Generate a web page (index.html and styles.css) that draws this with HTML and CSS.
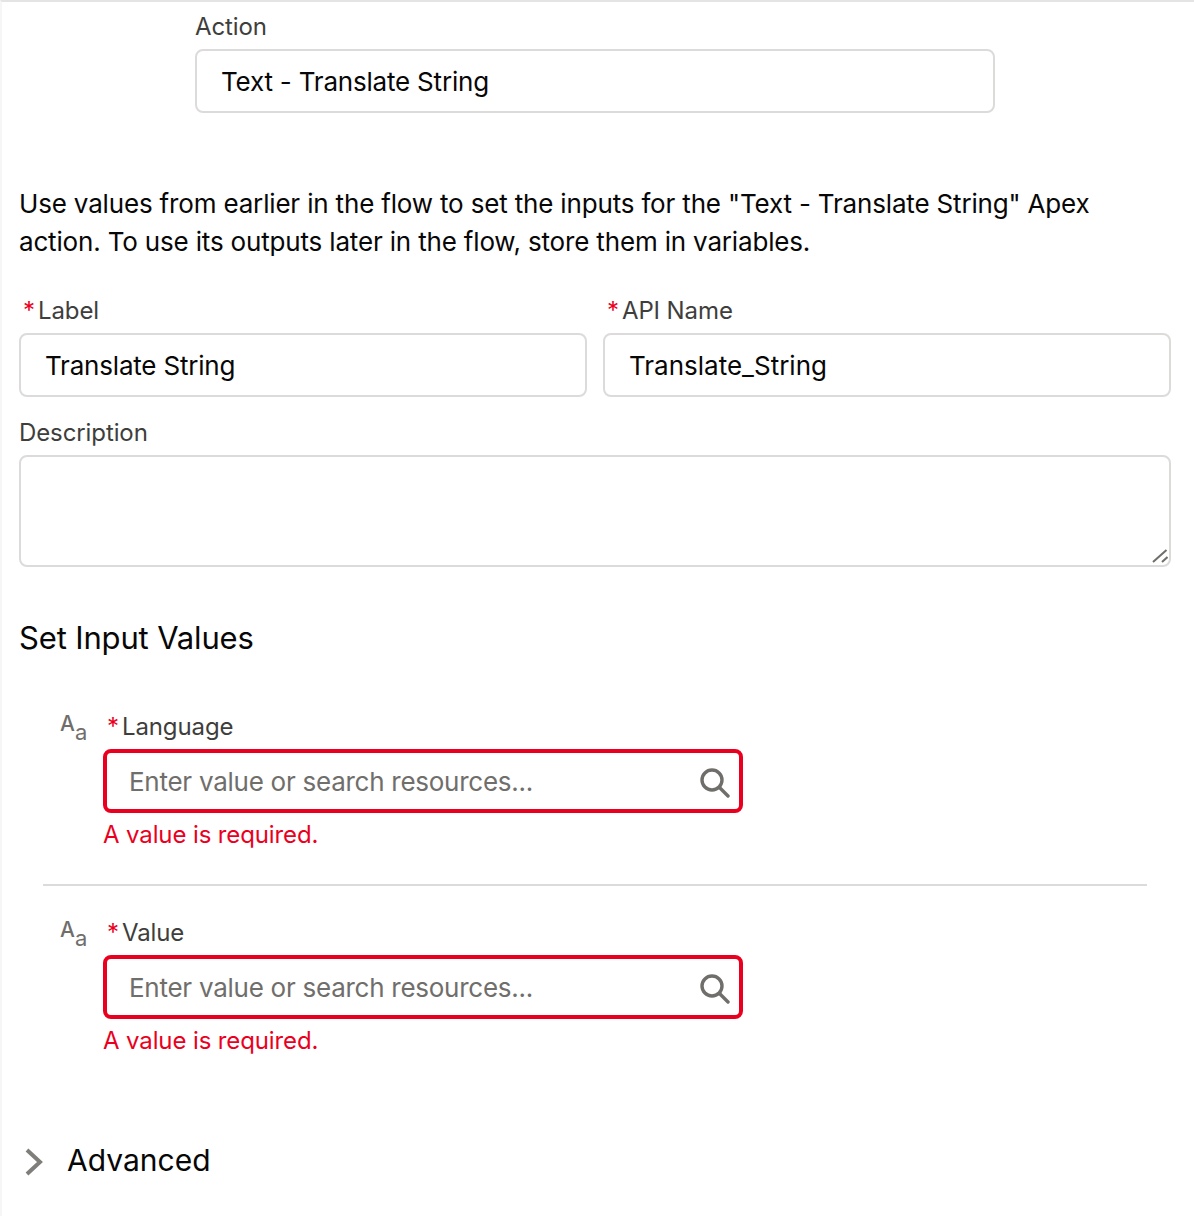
FILE: index.html
```html
<!DOCTYPE html>
<html lang="en">
<head>
    <meta charset="UTF-8">
    <meta name="viewport" content="width=device-width, initial-scale=1.0">
    <title>Translate String</title>
    <link rel="stylesheet" href="styles.css">
</head>
<body>
    <div class="panel">
        <div class="action-field">
            <label class="field-label">Action</label>
            <input class="text-input" type="text" value="Text - Translate String">
        </div>

        <p class="intro">Use values from earlier in the flow to set the inputs for the "Text - Translate String" Apex action. To use its outputs later in the flow, store them in variables.</p>

        <div class="name-row">
            <div>
                <label class="field-label"><span class="req">*</span>Label</label>
                <input class="text-input" type="text" value="Translate String">
            </div>
            <div>
                <label class="field-label"><span class="req">*</span>API Name</label>
                <input class="text-input api-name" type="text" value="Translate_String">
            </div>
        </div>

        <div class="desc-field">
            <label class="field-label">Description</label>
            <div class="area-wrap">
                <textarea class="text-area"></textarea>
                <svg class="grip" viewBox="0 0 16 14" width="16" height="14" aria-hidden="true">
                    <path d="M1 13L14.5 1M10 13L15.5 8"></path>
                </svg>
            </div>
        </div>

        <h2 class="section-title">Set Input Values</h2>

        <div class="param">
            <div class="type-icon"><span class="type-a">A</span><span class="type-b">a</span></div>
            <div class="param-body">
                <label class="field-label"><span class="req">*</span>Language</label>
                <div class="search-box">
                    <input class="search-input" type="text" placeholder="Enter value or search resources...">
                    <svg class="search-icon" viewBox="0 0 30 30" width="30" height="30" aria-hidden="true">
                        <circle cx="12" cy="12" r="10"></circle>
                        <path d="M19.5 19.5L28 28"></path>
                    </svg>
                </div>
                <div class="error">A value is required.</div>
            </div>
        </div>

        <hr class="divider">

        <div class="param">
            <div class="type-icon"><span class="type-a">A</span><span class="type-b">a</span></div>
            <div class="param-body">
                <label class="field-label"><span class="req">*</span>Value</label>
                <div class="search-box">
                    <input class="search-input" type="text" placeholder="Enter value or search resources...">
                    <svg class="search-icon" viewBox="0 0 30 30" width="30" height="30" aria-hidden="true">
                        <circle cx="12" cy="12" r="10"></circle>
                        <path d="M19.5 19.5L28 28"></path>
                    </svg>
                </div>
                <div class="error">A value is required.</div>
            </div>
        </div>

        <div class="advanced">
            <svg class="chevron" viewBox="0 0 18 28" width="18" height="28" aria-hidden="true">
                <path d="M2 2L15 14L2 26"></path>
            </svg>
            <span>Advanced</span>
        </div>
    </div>
</body>
</html>
```

FILE: styles.css
```css
* {
    box-sizing: border-box;
}
html, body {
    margin: 0;
    padding: 0;
    background: #fff;
}
body {
    font-family: Inter, "Liberation Sans", sans-serif;
    color: #080707;
}
.panel {
    width: 1194px;
    height: 1216px;
    overflow: hidden;
    border-top: 2px solid #e4e4e4;
    border-left: 2px solid #f6f6f6;
    padding: 0 23px 0 17px;
}
.field-label {
    display: block;
    height: 22px;
    line-height: 22px;
    font-size: 24px;
    letter-spacing: -0.1px;
    color: #3e3e3c;
}
.req {
    color: #ea001e;
    margin: 0 3px 0 4px;
}
.action-field {
    width: 800px;
    margin: 14px 0 0 176px;
}
.text-input {
    display: block;
    width: 100%;
    height: 64px;
    margin-top: 11px;
    padding: 0 24px;
    border: 2px solid #dddbda;
    border-radius: 8px;
    background: #fff;
    font: 26px Inter, "Liberation Sans", sans-serif;
    letter-spacing: -0.2px;
    color: #080707;
    outline: none;
}
.api-name {
    letter-spacing: 0;
}
.intro {
    margin: 72px 0 0;
    font-size: 26px;
    line-height: 38px;
    letter-spacing: -0.17px;
}
.name-row {
    display: grid;
    grid-template-columns: 568px 568px;
    gap: 16px;
    margin-top: 39px;
}
.desc-field {
    margin-top: 25px;
}
.area-wrap {
    position: relative;
    margin-top: 11px;
}
.text-area {
    display: block;
    width: 100%;
    height: 112px;
    border: 2px solid #dddbda;
    border-radius: 8px;
    background: #fff;
    outline: none;
    resize: none;
}
.grip {
    position: absolute;
    right: 3px;
    bottom: 4px;
    fill: none;
    stroke: #706e6b;
    stroke-width: 2;
}
.section-title {
    margin: 52px 0 0;
    font-size: 31px;
    line-height: 38px;
    letter-spacing: -0.15px;
    font-weight: 400;
}
.param {
    display: flex;
    margin-top: 59px;
    padding-left: 40px;
}
.param + .divider + .param {
    margin-top: 36px;
}
.type-icon {
    flex: none;
    display: flex;
    align-items: flex-start;
    width: 44px;
    padding-left: 1px;
    color: #706e6b;
}
.type-a {
    font-size: 21px;
    font-weight: 500;
    line-height: 16px;
}
.type-b {
    font-size: 22px;
    line-height: 14px;
    margin: 9px 0 0;
}
.param-body {
    width: 640px;
}
.search-box {
    position: relative;
    margin-top: 11px;
}
.search-input {
    display: block;
    width: 100%;
    height: 64px;
    padding: 1px 64px 0 22px;
    border: 4px solid #ea001e;
    border-radius: 8px;
    background: #fff;
    font: 26px Inter, "Liberation Sans", sans-serif;
    letter-spacing: -0.26px;
    outline: none;
}
.search-input::placeholder {
    color: #706e6b;
    opacity: 1;
}
.search-icon {
    position: absolute;
    top: 19px;
    right: 13px;
    fill: none;
    stroke: #706e6b;
    stroke-width: 3.4;
    stroke-linecap: round;
}
.error {
    margin-top: 9px;
    font-size: 24px;
    line-height: 26px;
    letter-spacing: -0.12px;
    color: #ea001e;
}
.divider {
    margin: 36px 24px 0;
    height: 2px;
    border: 0;
    background: #dddbda;
}
.advanced {
    display: flex;
    align-items: center;
    margin-top: 87px;
    padding-left: 6px;
    font-size: 30px;
    line-height: 38px;
}
.chevron {
    flex: none;
    margin: 4px 24px 0 0;
    fill: none;
    stroke: #807e7b;
    stroke-width: 4;
}
```
